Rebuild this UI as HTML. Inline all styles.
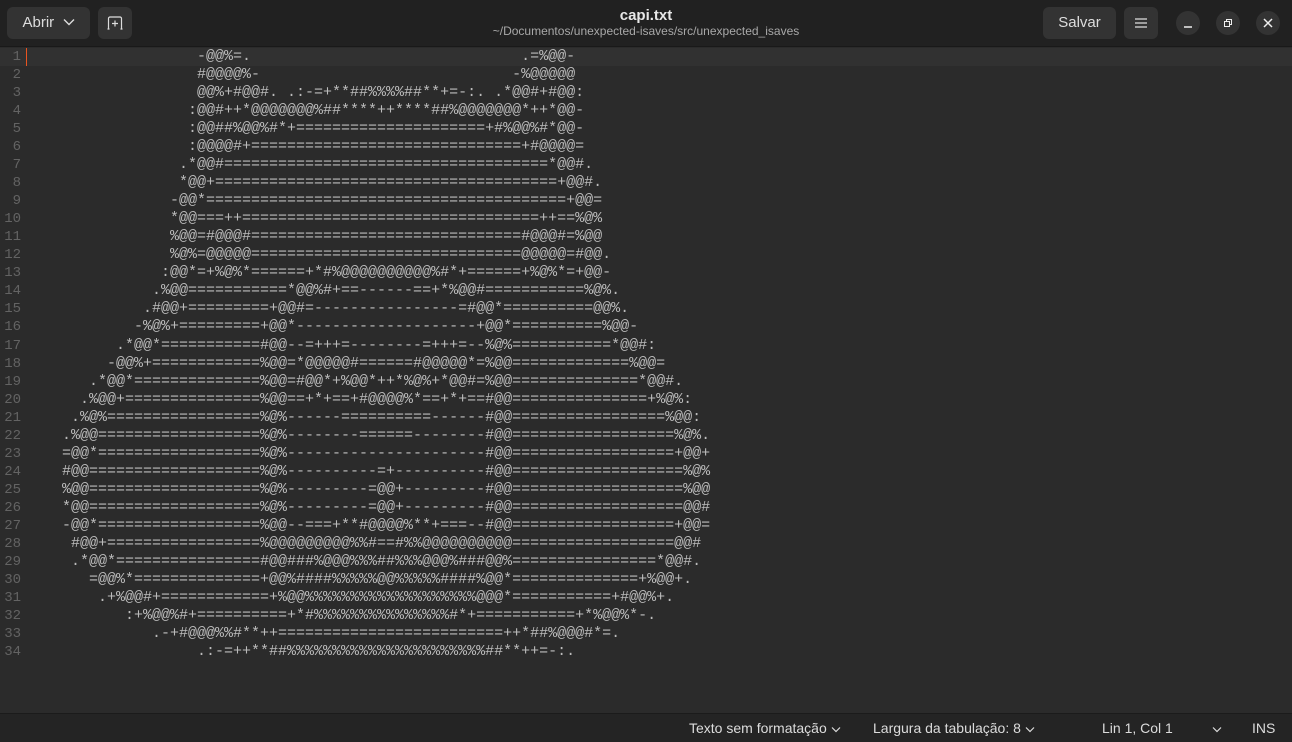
<!DOCTYPE html>
<html><head><meta charset="utf-8"><style>
html,body{margin:0;padding:0;width:1292px;height:741px;overflow:hidden;background:#2b2b2b;font-family:"Liberation Sans",sans-serif}
.hdr{position:absolute;left:0;top:0;width:1292px;height:46px;background:#212121;border-bottom:1px solid #191919}
.btn{position:absolute;top:7px;height:32px;background:#333;border-radius:6px;color:#ddd;font-size:15px;line-height:32px;text-align:center}
.title{position:absolute;left:0;width:1292px;text-align:center;color:#e8e8e8}
.wc{position:absolute;top:11px;width:24px;height:24px;border-radius:12px;background:#333}
.ed{position:absolute;left:0;top:47px;width:1292px;height:666px;background:#2b2b2b}
.cur{position:absolute;left:0;top:1px;width:1292px;height:18px;background:#313131}
.nums{position:absolute;left:0;top:1px;width:21px;text-align:right;font-family:"Liberation Mono",monospace;font-size:14px;line-height:18.03px;color:#636363;white-space:pre;margin:0}
pre.txt{position:absolute;left:35px;top:1px;margin:0;font-family:"Liberation Mono",monospace;font-size:15px;line-height:18.03px;color:#bcbcbc}
.caret{position:absolute;left:26px;top:1px;width:1px;height:18px;background:#e95420}
.sb{position:absolute;left:0;top:713px;width:1292px;height:28px;background:#242424;border-top:1px solid #1b1b1b;color:#dcdcdc;font-size:14px}
.sb span{position:absolute;top:6px}
</style></head><body>
<div class="hdr">
 <div class="btn" style="left:7px;width:83px">Abrir&nbsp;&nbsp;<svg width="12" height="8" viewBox="0 0 12 8" style="vertical-align:1px"><path d="M1 1.5l5 5 5-5" stroke="#ddd" stroke-width="1.4" fill="none"/></svg></div>
 <div class="btn" style="left:98px;width:34px"><svg width="16" height="14" viewBox="0 0 16 14" style="margin-top:9px"><path d="M1.5 13V2.5a1.5 1.5 0 0 1 1.5-1.5h10a1.5 1.5 0 0 1 1.5 1.5V13M0.5 13h2M13.5 13h2M8 4.5v6M5 7.5h6" stroke="#ddd" stroke-width="1.2" fill="none"/></svg></div>
 <div class="title" style="top:7px;font-size:15px;font-weight:bold">capi.txt</div>
 <div class="title" style="top:24px;font-size:12px;color:#a8a8a8">~/Documentos/unexpected-isaves/src/unexpected_isaves</div>
 <div class="btn" style="left:1043px;width:73px">Salvar</div>
 <div class="btn" style="left:1124px;width:34px"><svg width="12" height="10" viewBox="0 0 12 10" style="margin-top:11px;display:block;margin-left:11px"><path d="M0 1h12M0 5h12M0 9h12" stroke="#ddd" stroke-width="1.2"/></svg></div>
 <div class="wc" style="left:1176px"><svg width="24" height="24"><path d="M8 16h8" stroke="#eee" stroke-width="1.5"/></svg></div>
 <div class="wc" style="left:1216px"><svg width="24" height="24"><rect x="8.5" y="10.5" width="5" height="5" stroke="#eee" fill="none"/><path d="M10.5 10.5V8.5h5v5h-2" stroke="#eee" fill="none"/></svg></div>
 <div class="wc" style="left:1256px"><svg width="24" height="24"><path d="M8 8l8 8M16 8l-8 8" stroke="#eee" stroke-width="1.5"/></svg></div>
</div>
<div class="ed">
<div class="cur"></div>
<pre class="nums">1
2
3
4
5
6
7
8
9
10
11
12
13
14
15
16
17
18
19
20
21
22
23
24
25
26
27
28
29
30
31
32
33
34</pre>
<div class="caret"></div>
<pre class="txt">                  -@@%=.                              .=%@@-
                  #@@@@%-                            -%@@@@@
                  @@%+#@@#. .:-=+**##%%%%##**+=-:. .*@@#+#@@:
                 :@@#++*@@@@@@@%##****++****##%@@@@@@@*++*@@-
                 :@@##%@@%#*+=====================+#%@@%#*@@-
                 :@@@@#+==============================+#@@@@=
                .*@@#====================================*@@#.
                *@@+======================================+@@#.
               -@@*========================================+@@=
               *@@===++=================================++==%@%
               %@@=#@@@#==============================#@@@#=%@@
               %@%=@@@@@==============================@@@@@=#@@.
              :@@*=+%@%*======+*#%@@@@@@@@@@%#*+======+%@%*=+@@-
             .%@@===========*@@%#+==------==+*%@@#===========%@%.
            .#@@+=========+@@#=----------------=#@@*==========@@%.
           -%@%+=========+@@*--------------------+@@*==========%@@-
         .*@@*===========#@@--=+++=--------=+++=--%@%===========*@@#:
        -@@%+============%@@=*@@@@@#======#@@@@@*=%@@=============%@@=
      .*@@*==============%@@=#@@*+%@@*++*%@%+*@@#=%@@==============*@@#.
     .%@@+===============%@@==+*+==+#@@@@%*==+*+==#@@===============+%@%:
    .%@%=================%@%------==========------#@@=================%@@:
   .%@@==================%@%--------======--------#@@==================%@%.
   =@@*==================%@%----------------------#@@==================+@@+
   #@@===================%@%----------=+----------#@@===================%@%
   %@@===================%@%---------=@@+---------#@@===================%@@
   *@@===================%@%---------=@@+---------#@@===================@@#
   -@@*==================%@@--===+**#@@@@%**+===--#@@==================+@@=
    #@@+=================%@@@@@@@@@%%#==#%%@@@@@@@@@@==================@@#
    .*@@*================#@@###%@@@%%%##%%%@@@%###@@%================*@@#.
      =@@%*==============+@@%####%%%%%@@%%%%%####%@@*==============+%@@+.
       .+%@@#+============+%@@%%%%%%%%%%%%%%%%%%%@@@*===========+#@@%+.
          :+%@@%#+==========+*#%%%%%%%%%%%%%%%#*+===========+*%@@%*-.
             .-+#@@@%%#**++=========================++*##%@@@#*=.
                  .:-=++**##%%%%%%%%%%%%%%%%%%%%%%##**++=-:.</pre>
</div>
<div class="sb">
 <span style="left:689px">Texto sem formatação <svg width="10" height="7" viewBox="0 0 10 7"><path d="M1 1.5l4 4 4-4" stroke="#ddd" stroke-width="1.2" fill="none"/></svg></span>
 <span style="left:873px">Largura da tabulação: 8 <svg width="10" height="7" viewBox="0 0 10 7"><path d="M1 1.5l4 4 4-4" stroke="#ddd" stroke-width="1.2" fill="none"/></svg></span>
 <span style="left:1102px">Lin 1, Col 1</span>
 <span style="left:1212px"><svg width="10" height="7" viewBox="0 0 10 7"><path d="M1 1.5l4 4 4-4" stroke="#ddd" stroke-width="1.2" fill="none"/></svg></span>
 <span style="left:1252px">INS</span>
</div>
</body></html>
